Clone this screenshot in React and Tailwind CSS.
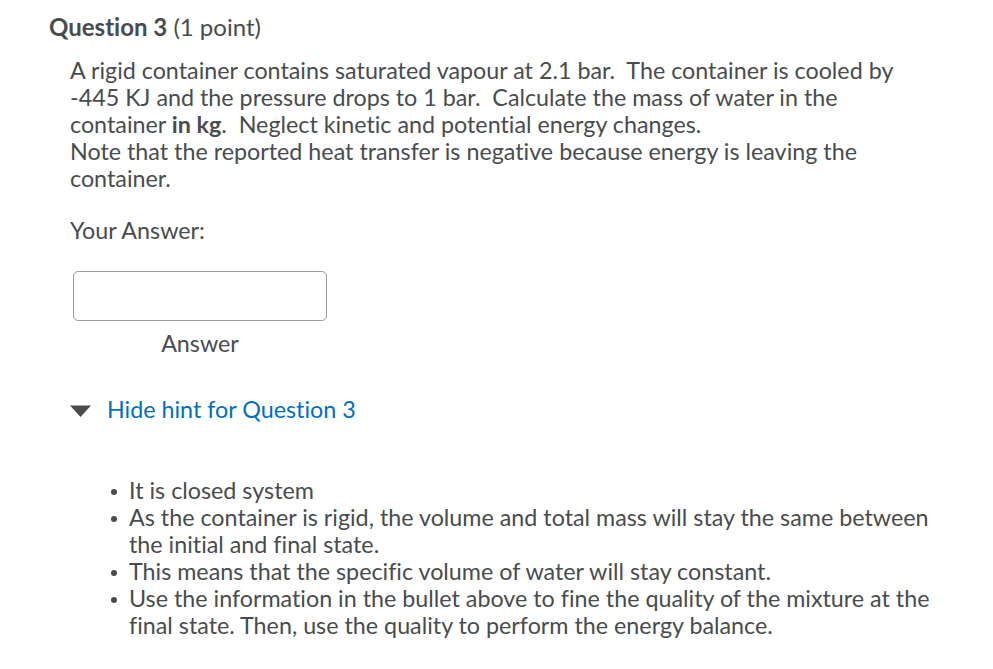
const HINTS = [
  ['It is closed system'],
  ['As the container is rigid, the volume and total mass will stay the same between', 'the initial and final state.'],
  ['This means that the specific volume of water will stay constant.'],
  ['Use the information in the bullet above to fine the quality of the mixture at the', 'final state. Then, use the quality to perform the energy balance.'],
]

export default function App() {
  return (
    <div className="min-h-screen bg-white text-[#494c4e] font-['Lato',sans-serif] [font-variant-ligatures:none]">
      <div className="pl-[49px] pt-[12px]">
        <h2 className="text-[24px] leading-[30px]">
          <span className="font-bold">Question 3</span> (1 point)
        </h2>

        <div className="pl-[21px] pt-[15px] text-[23.3px] leading-[27px] pr-[20px]">
          <p>
            A rigid container contains saturated vapour at 2.1 bar.&nbsp; The container is cooled by
            <br />
            -445 KJ and the pressure drops to 1 bar.&nbsp; Calculate the mass of water in the
            <br />
            container <strong className="font-bold">in kg</strong>.&nbsp; Neglect kinetic and potential energy changes.
            <br />
            Note that the reported heat transfer is negative because energy is leaving the
            <br />
            container.
          </p>

          <p className="mt-[25px]">Your Answer:</p>

          <div className="mt-[27px] w-[260px] flex flex-col items-center">
            <input
              type="text"
              className="w-[254px] h-[50px] rounded-[5px] border border-[#9a9c9e] bg-white"
            />
            <span className="mt-[9px]">Answer</span>
          </div>

          {/* hint toggle */}
          <button className="mt-[39px] flex items-center gap-[16px] text-[#006fbf]">
            <svg width="21" height="12" viewBox="0 0 21 12" className="mt-[2px]">
              <path d="M0 0.5 L21 0.5 L10.5 12 Z" fill="#494c4e" />
            </svg>
            <span>Hide hint for Question 3</span>
          </button>

          <ul className="mt-[54px] pl-[41px]">
            {HINTS.map((lines, i) => (
              <li key={i} className="flex">
                <span className="w-[18px] shrink-0 pt-[12px]">
                  <span className="block w-[6px] h-[6px] rounded-full bg-[#494c4e]" />
                </span>
                <span>
                  {lines.map((l, j) => (
                    <span key={j}>
                      {j > 0 && <br />}
                      {l}
                    </span>
                  ))}
                </span>
              </li>
            ))}
          </ul>
        </div>
      </div>
    </div>
  )
}
